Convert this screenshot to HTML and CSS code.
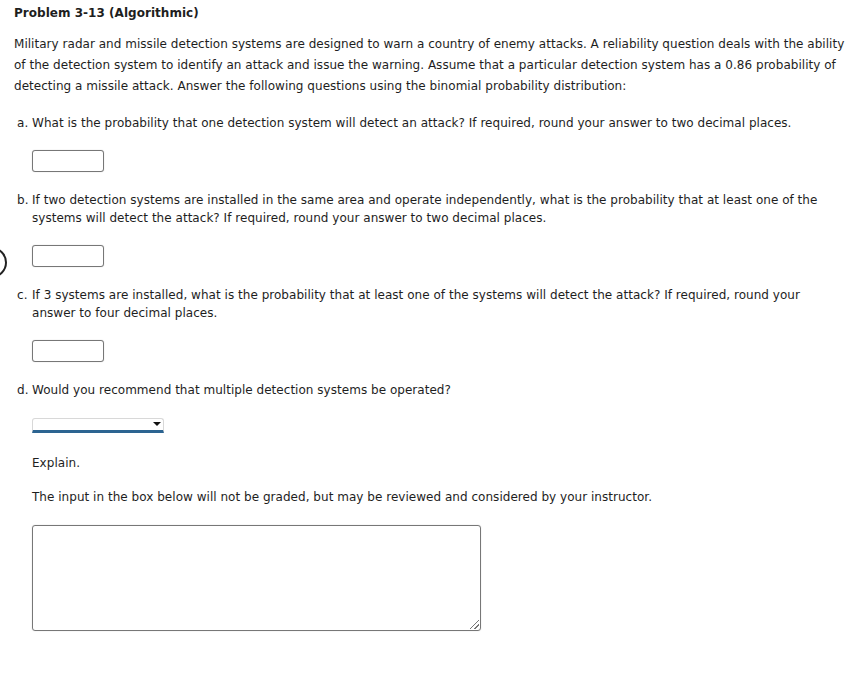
FILE: index.html
```html
<!DOCTYPE html>
<html>
<head>
<meta charset="utf-8">
<link rel="stylesheet" href="styles.css">
</head>
<body>
<div class="ring"></div>
<div class="page">
  <h1 class="title">Problem 3-13 (Algorithmic)</h1>
  <p class="intro">Military radar and missile detection systems are designed to warn a country of enemy attacks. A reliability question deals with the ability of the detection system to identify an attack and issue the warning. Assume that a particular detection system has a 0.86 probability of detecting a missile attack. Answer the following questions using the binomial probability distribution:</p>

  <div class="q">
    <span class="mark">a.</span>
    <div class="body">
      <div class="text">What is the probability that one detection system will detect an attack? If required, round your answer to two decimal places.</div>
      <input class="num" type="text">
    </div>
  </div>

  <div class="q">
    <span class="mark">b.</span>
    <div class="body">
      <div class="text">If two detection systems are installed in the same area and operate independently, what is the probability that at least one of the systems will detect the attack? If required, round your answer to two decimal places.</div>
      <input class="num" type="text">
    </div>
  </div>

  <div class="q">
    <span class="mark">c.</span>
    <div class="body">
      <div class="text">If 3 systems are installed, what is the probability that at least one of the systems will detect the attack? If required, round your answer to four decimal places.</div>
      <input class="num" type="text">
    </div>
  </div>

  <div class="q">
    <span class="mark">d.</span>
    <div class="body">
      <div class="text">Would you recommend that multiple detection systems be operated?</div>
      <div class="select"><span class="arrow"></span></div>
      <div class="explain">Explain.</div>
      <div class="note">The input in the box below will not be graded, but may be reviewed and considered by your instructor.</div>
      <div class="area"><span class="grip"></span></div>
    </div>
  </div>
</div>
</body>
</html>
```

FILE: styles.css
```css
html, body {
  margin: 0;
  padding: 0;
  background: #fff;
}
body {
  font-family: "DejaVu Sans", Verdana, sans-serif;
  font-size: 12px;
  letter-spacing: 0.03px;
  color: #1e1e1e;
  position: relative;
  overflow: hidden;
  height: 680px;
}
.ring {
  position: absolute;
  left: -24px;
  top: 247px;
  width: 27px;
  height: 27px;
  border: 2.5px solid #222;
  border-radius: 50%;
}
.page {
  padding: 4px 0 0 14px;
}
.title {
  margin: 0;
  font-size: 12px;
  font-weight: bold;
  line-height: 18px;
  color: #1e1e1e;
}
.intro {
  margin: 12px 0 0 0;
  line-height: 21px;
  width: 835px;
}
.q {
  display: flex;
  margin-top: 17px;
  padding-left: 3px;
  line-height: 18px;
}
.q + .q { margin-top: 19px; }
.mark {
  width: 15px;
  flex: none;
}
.body {
  flex: 1;
  display: flex;
  flex-direction: column;
  align-items: flex-start;
  padding-right: 20px;
}
.num {
  margin: 18px 0 0 0;
  width: 72px;
  height: 22px;
  box-sizing: border-box;
  border: 1px solid #777;
  border-radius: 3px;
  box-shadow: 0 0 1px rgba(0,0,0,0.3);
  padding: 0;
  outline: none;
}
.select {
  margin-top: 19px;
  width: 132px;
  height: 15px;
  box-sizing: border-box;
  border: 1px solid #d8d8d8;
  border-bottom: 3px solid #2c6491;
  border-radius: 3px 3px 0 0;
  position: relative;
}
.arrow {
  position: absolute;
  right: 2px;
  top: 3px;
  width: 0;
  height: 0;
  border-left: 4px solid transparent;
  border-right: 4px solid transparent;
  border-top: 4px solid #111;
}
.explain {
  margin-top: 21px;
}
.note {
  margin-top: 16px;
}
.area {
  margin-top: 19px;
  width: 449px;
  height: 106px;
  box-sizing: border-box;
  border: 1px solid #777;
  border-radius: 3px;
  box-shadow: 0 0 1px rgba(0,0,0,0.3);
  position: relative;
}
.grip {
  position: absolute;
  right: 1px;
  bottom: 1px;
  width: 9px;
  height: 9px;
  background: linear-gradient(135deg, transparent 45%, #777 45%, #777 52%, transparent 52%, transparent 72%, #777 72%, #777 79%, transparent 79%);
}
```
